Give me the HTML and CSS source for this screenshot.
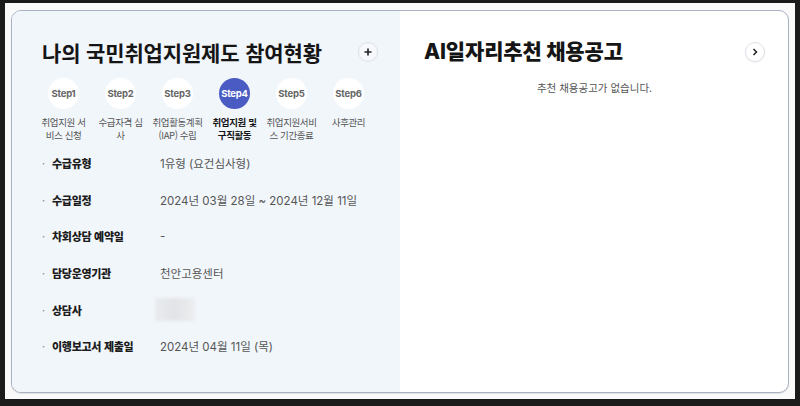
FILE: index.html
```html
<!DOCTYPE html>
<html lang="ko">
<head>
<meta charset="UTF-8">
<meta name="viewport" content="width=device-width,initial-scale=1">
<title>나의 국민취업지원제도 참여현황</title>
<link rel="stylesheet" href="styles.css">
</head>
<body>
<div class="frame">
  <div class="board">
    <section class="status">
      <div class="panel-head">
        <h2>나의 국민취업지원제도 참여현황</h2>
        <button class="round-btn" type="button" aria-label="더보기">
          <svg width="8" height="8" viewBox="0 0 8 8"><path d="M4 0.5v7M0.5 4h7" stroke="#222" stroke-width="1.6"/></svg>
        </button>
      </div>
      <ol class="steps">
        <li><span class="step-dot">Step1</span><span class="step-name">취업지원 서<br>비스 신청</span></li>
        <li><span class="step-dot">Step2</span><span class="step-name">수급자격 심<br>사</span></li>
        <li><span class="step-dot">Step3</span><span class="step-name">취업활동계획<br>(IAP) 수립</span></li>
        <li class="on"><span class="step-dot">Step4</span><span class="step-name">취업지원 및<br>구직활동</span></li>
        <li><span class="step-dot">Step5</span><span class="step-name">취업지원서비<br>스 기간종료</span></li>
        <li><span class="step-dot">Step6</span><span class="step-name">사후관리</span></li>
      </ol>
      <ul class="info">
        <li><span class="info-label">수급유형</span><span class="info-val">1유형 (요건심사형)</span></li>
        <li><span class="info-label">수급일정</span><span class="info-val">2024년 03월 28일 ~ 2024년 12월 11일</span></li>
        <li><span class="info-label">차회상담 예약일</span><span class="info-val">-</span></li>
        <li><span class="info-label">담당운영기관</span><span class="info-val">천안고용센터</span></li>
        <li><span class="info-label">상담사</span><span class="info-val"><span class="masked"></span></span></li>
        <li><span class="info-label">이행보고서 제출일</span><span class="info-val">2024년 04월 11일 (목)</span></li>
      </ul>
    </section>
    <section class="jobs">
      <div class="panel-head">
        <h2>AI일자리추천 채용공고</h2>
        <button class="round-btn white" type="button" aria-label="이동">
          <svg width="6" height="8" viewBox="0 0 6 8"><path d="M1.5 1l3 3-3 3" fill="none" stroke="#222" stroke-width="1.5"/></svg>
        </button>
      </div>
      <p class="empty">추천 채용공고가 없습니다.</p>
    </section>
  </div>
</div>
</body>
</html>
```

FILE: styles.css
```css
:root {
  --ink: #151515;
  --muted: #555;
  --panel-bg: #f1f6fb;
  --line: #a9b1c3;
  --point: #4a5cc3;
}
* { box-sizing: border-box; }
html, body { margin: 0; height: 100%; }
body {
  background: #1b1b1b;
  font-family: Inter, 'Noto Sans CJK KR', sans-serif;
  color: var(--ink);
}
.frame {
  margin: 3px 5px 0;
  height: 396px;
  background: #fafafa;
  padding: 7px 6px 6px;
}
.board {
  display: flex;
  height: 383px;
  border: 1px solid var(--line);
  border-radius: 10px;
  overflow: hidden;
  background: #fff;
  box-shadow: 0 1px 1px rgba(60,70,90,0.15);
}

.status { width: 388px; background: var(--panel-bg); padding: 27px 22px 0 30px; }
.jobs { flex: 1; padding: 27px 23px 0 24px; }

.panel-head { display: flex; align-items: center; justify-content: space-between; height: 28px; }
.panel-head h2 {
  margin: 0; font-size: 21px; font-weight: 700; letter-spacing: -0.15px; line-height: 28px;
  font-family: 'Noto Sans CJK KR', sans-serif;
}
.jobs .panel-head h2 { font-family: Inter, 'Noto Sans CJK KR', sans-serif; font-weight: 800; }
.round-btn {
  width: 20px; height: 20px; padding: 0; border-radius: 50%;
  border: 1px solid #dde1e7; background: #f6f8fb;
  display: flex; align-items: center; justify-content: center;
}
.round-btn.white { background: #fff; box-shadow: 0 1px 2px rgba(0,0,0,0.06); }

.steps { list-style: none; margin: 12px 0 0 -6px; padding: 0; display: flex; gap: 2px; }
.steps li { width: 55px; display: flex; flex-direction: column; align-items: center; }
.step-dot {
  width: 31px; height: 31px; border-radius: 50%; background: #fff;
  display: flex; align-items: center; justify-content: center;
  font-size: 9.5px; font-weight: 700; color: #666; letter-spacing: -0.2px;
}
.step-name {
  margin-top: 7px; font-size: 9.5px; line-height: 13px; text-align: center; color: var(--muted);
  font-family: 'Noto Sans CJK KR', sans-serif; white-space: nowrap; letter-spacing: -0.4px;
}
.steps li.on .step-dot { background: var(--point); color: #fff; }
.steps li.on .step-name { color: var(--ink); font-weight: 700; }

.info { list-style: none; margin: 3px 0 0; padding: 0; }
.info li { display: flex; align-items: center; height: 36.6px; }
.info-label {
  width: 118px; font-size: 11px; font-weight: 900; color: #1c1c1c; padding-left: 10px; position: relative;
  font-family: 'Noto Sans CJK KR', sans-serif; letter-spacing: -0.3px;
}
.info-label::before { content: "·"; position: absolute; left: 0; color: #888; font-weight: 400; }
.info-val { font-size: 11.5px; color: var(--muted); }
.masked {
  display: block; width: 40px; height: 23px; margin-left: -5px;
  background: linear-gradient(90deg, #e9ebee, #e1e3e6 50%, #eceef0);
  filter: blur(1.5px);
}

.empty {
  margin: 14px 0 0; text-align: center; font-size: 10.5px; color: #555;
  font-family: 'Noto Sans CJK KR', sans-serif;
}
```
